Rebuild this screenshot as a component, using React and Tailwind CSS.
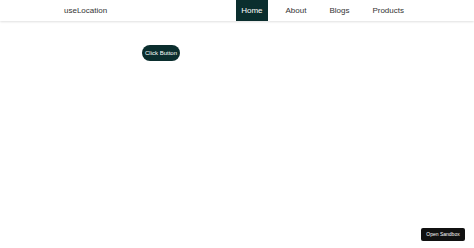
export default function App() {
  return (
    <div className="relative h-[248px] w-full bg-white font-['Liberation_Sans',Arial,sans-serif]">
      <nav className="flex h-[21px] items-center justify-between pl-[64px] pr-[65px] shadow-[0_1px_2px_rgba(0,0,0,0.12)]">
        <span className="text-[8px] text-[#333]">useLocation</span>
        <ul className="flex h-full items-stretch gap-[13px] text-[8px] text-[#333]">
          <li className="flex items-center bg-[#0b2e2e] px-[5px] text-white">Home</li>
          <li className="flex items-center px-[5px]">About</li>
          <li className="flex items-center px-[5px]">Blogs</li>
          <li className="flex items-center px-[5px]">Products</li>
        </ul>
      </nav>
      <div className="pl-[142px] pt-[24px]">
        <button className="flex h-[16px] w-[38px] items-center justify-center rounded-full bg-[#0b2e2e] text-[6px] text-white">
          Click Button
        </button>
      </div>
      <button className="absolute bottom-[7px] right-[9px] h-[13px] w-[44px] rounded-[2px] bg-[#111] text-[5px] text-white">
        Open Sandbox
      </button>
    </div>
  );
}
